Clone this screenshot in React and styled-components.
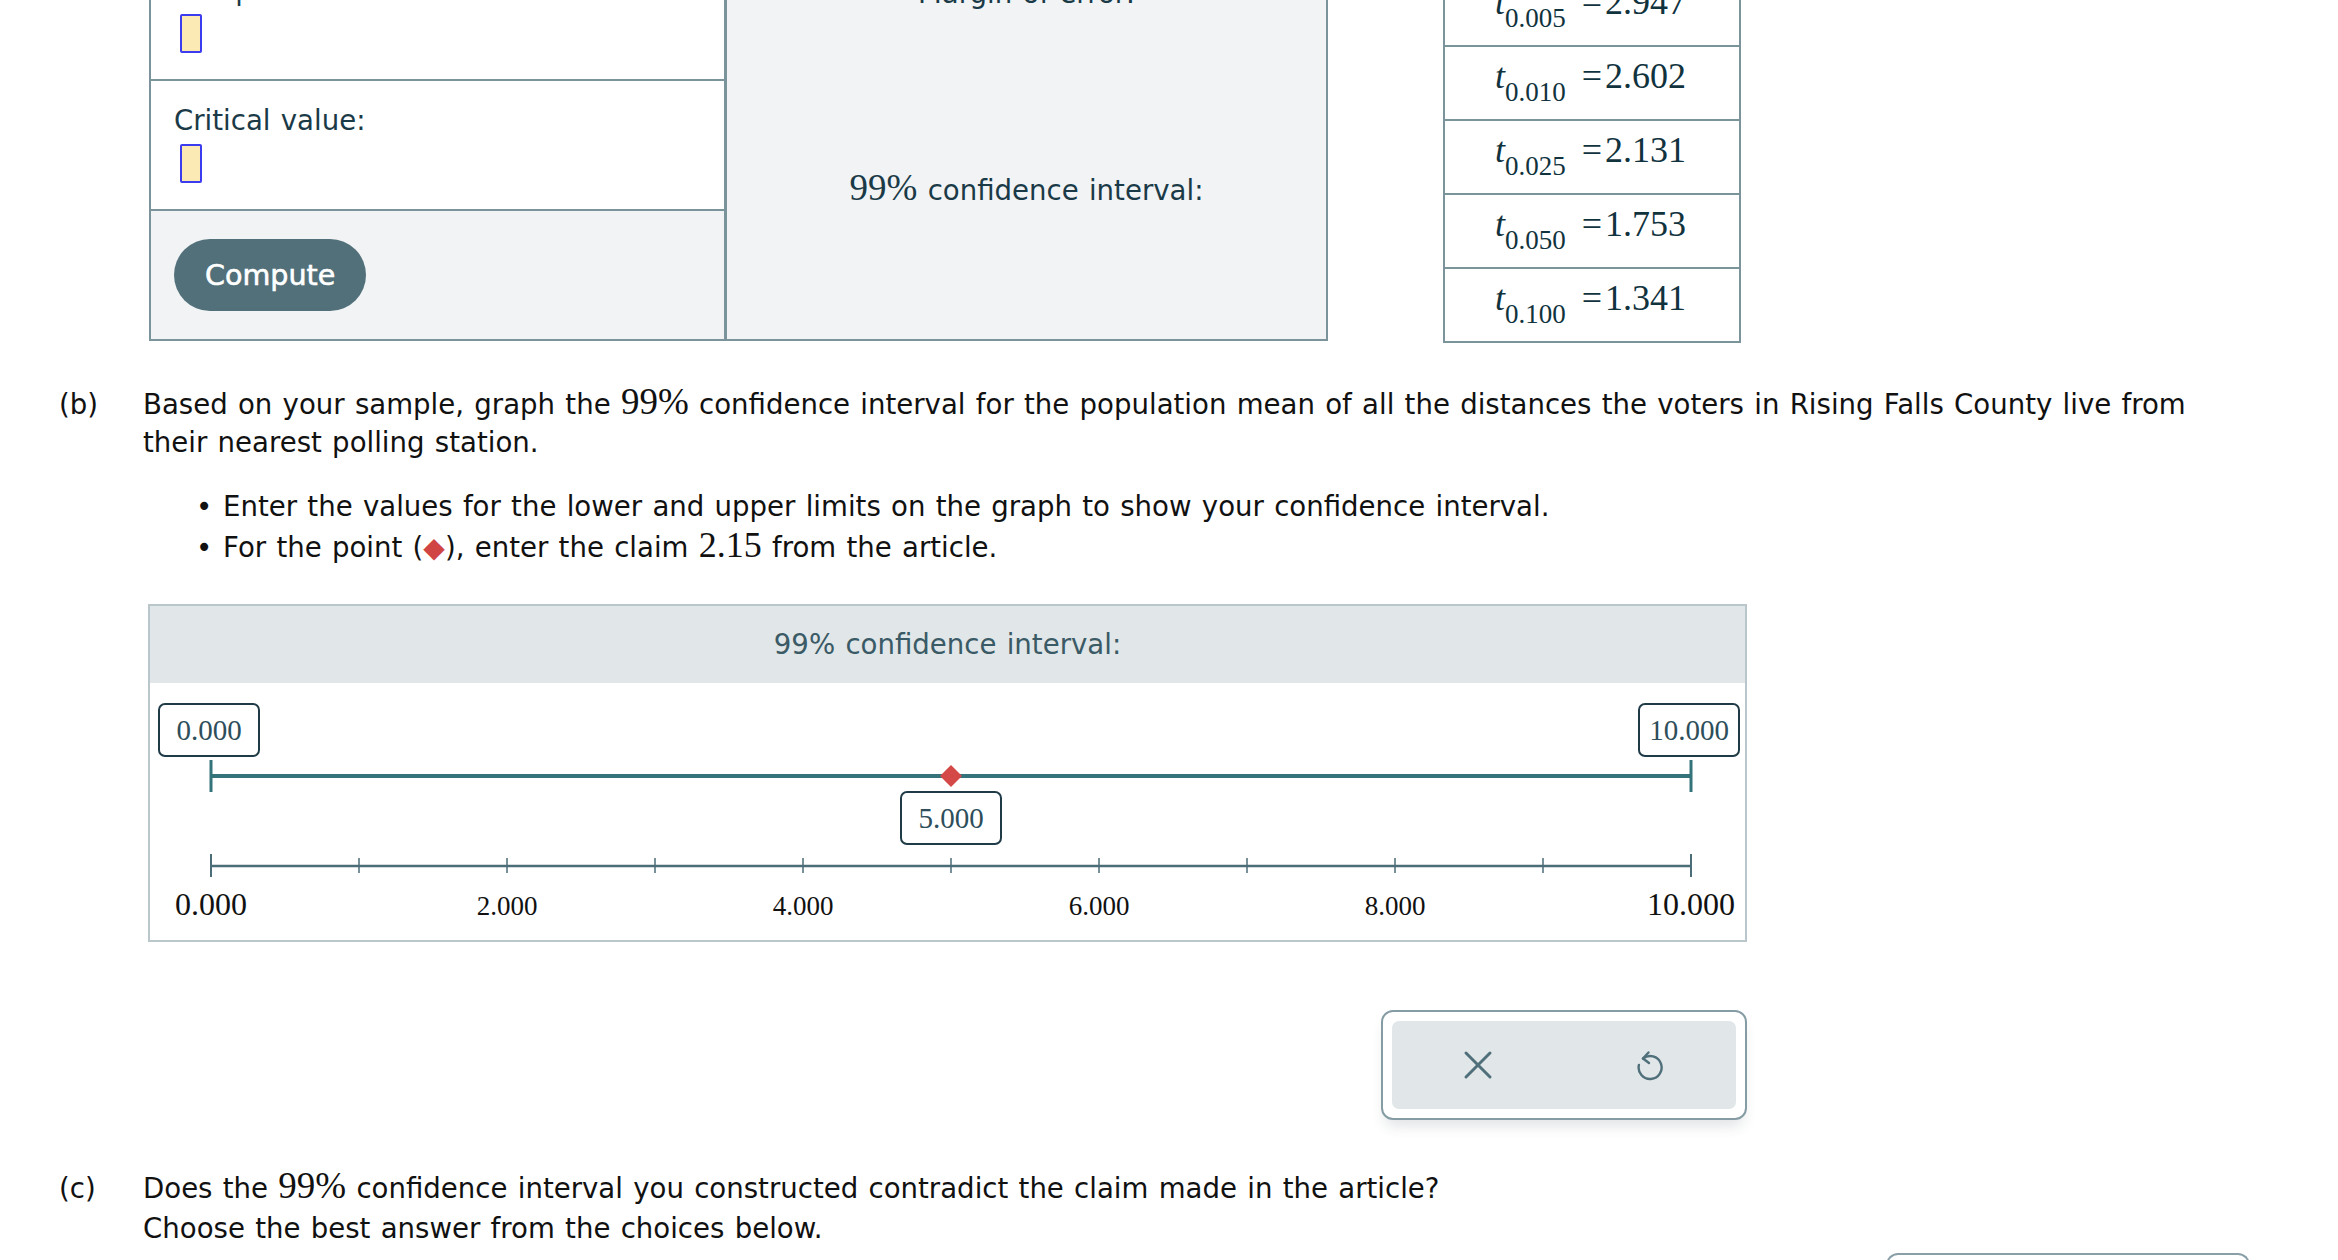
import React from 'react'
import styled, { createGlobalStyle } from 'styled-components'
import { X } from 'lucide-react'

const SANS = `"DejaVu Sans", Verdana, sans-serif`
const SERIF = `"Liberation Serif", "Times New Roman", serif`

const GlobalStyle = createGlobalStyle`
  html, body {
    margin: 0;
    padding: 0;
    background: #ffffff;
  }
  body {
    width: 2338px;
    height: 1260px;
    overflow: hidden;
    font-family: ${SANS};
    font-size: 27.6px;
    word-spacing: 1.5px;
    color: #111111;
  }
`

const Page = styled.div`
  margin-top: -51px;
  display: flex;
  flex-direction: column;
`

/* ---------- top: computation panel + t table ---------- */

const TopSection = styled.div`
  display: flex;
  align-items: flex-start;
  padding-left: 149px;
`

const PanelGroup = styled.div`
  display: flex;
  border: 2px solid #7b939b;
`

const LeftPanel = styled.div`
  width: 573px;
  border-right: 3px solid #7b939b;
  display: flex;
  flex-direction: column;
`

const FieldRow = styled.div`
  padding: 22px 23px 26px;
  background: #ffffff;
  border-bottom: 2px solid #7b939b;
  display: flex;
  flex-direction: column;
  align-items: flex-start;
`

const ButtonRow = styled.div`
  height: 128px;
  box-sizing: border-box;
  padding-left: 23px;
  background: #f1f3f5;
  display: flex;
  align-items: center;
`

const FieldLabel = styled.div`
  line-height: 36px;
  color: #1b3a47;
`

const BlankInput = styled.div`
  width: 22px;
  height: 39px;
  margin: 5px 0 0 6px;
  box-sizing: border-box;
  border: 2px solid #3b3bf0;
  border-radius: 2px;
  background: #fbeab3;
`

const ComputeButton = styled.button`
  height: 72px;
  padding: 0 31px;
  border: none;
  border-radius: 36px;
  background: #52707a;
  color: #ffffff;
  font-family: ${SANS};
  font-size: 28.6px;
  -webkit-text-stroke: 0.6px #ffffff;
`

const MiddlePanel = styled.div`
  width: 599px;
  background: #f1f3f5;
  padding-top: 25px;
  box-sizing: border-box;
  display: flex;
  flex-direction: column;
  align-items: center;
  gap: 161px;
`

const PanelText = styled.div`
  line-height: 36px;
  color: #1b3a47;
  white-space: nowrap;
`

const Serif = styled.span`
  font-family: ${SERIF};
  font-size: ${p => p.$size || 37}px;
  word-spacing: 0;
  line-height: 0;
`

const TTable = styled.div`
  margin: 22px 0 0 115px;
  width: 298px;
  box-sizing: border-box;
  border: 2px solid #7b939b;
  display: flex;
  flex-direction: column;
`

const TRow = styled.div`
  height: 72px;
  border-bottom: ${p => (p.$last ? 'none' : '2px solid #7b939b')};
  padding-left: 50px;
  font-family: ${SERIF};
  font-size: 36px;
  word-spacing: 0;
  line-height: 59px;
  color: #11333e;
  white-space: nowrap;
`

const TVar = styled.span`
  font-style: italic;
`

const TSub = styled.span`
  font-size: 27px;
  line-height: 0;
  vertical-align: -13px;
`

const TEq = styled.span`
  margin: 0 3px 0 16px;
`

/* ---------- parts (b) and (c) ---------- */

const Part = styled.section`
  display: grid;
  grid-template-columns: 84px 2090px;
  padding-left: 59px;
  margin-top: ${p => p.$mt}px;
  line-height: ${p => p.$lh}px;
  color: #111111;
`

const PartLabel = styled.div``

const PartBody = styled.div`
  display: flex;
  flex-direction: column;
`

const Paragraph = styled.p`
  margin: 0;
`

const BulletList = styled.ul`
  list-style: none;
  margin: 24px 0 0 53px;
  padding: 0;
  line-height: 41px;
`

const BulletItem = styled.li`
  display: flex;
`

const Bullet = styled.span`
  width: 27px;
  flex: none;
`

const Diamond = styled.span`
  color: #d04444;
  font-size: 28px;
`

const GraphBox = styled.div`
  margin: 36px 0 0 5px;
  width: 1599px;
  box-sizing: border-box;
  border: 2px solid #b9c6cb;
  background: #ffffff;
`

const GraphHeader = styled.div`
  height: 77px;
  line-height: 77px;
  text-align: center;
  background: #e1e6e8;
  color: #3a5a66;
`

const GraphCanvas = styled.div`
  position: relative;
  height: 257px;
`

const ValueBox = styled.div`
  position: absolute;
  left: ${p => p.$x}px;
  top: ${p => p.$y}px;
  width: 102px;
  height: 54px;
  box-sizing: border-box;
  border: 2px solid #1f3b47;
  border-radius: 7px;
  background: #ffffff;
  display: flex;
  align-items: center;
  justify-content: center;
  font-family: ${SERIF};
  font-size: 29px;
  color: #2d4e5a;
`

const ToolRow = styled.div`
  margin: 68px 0 0 5px;
  width: 1599px;
  display: flex;
  justify-content: flex-end;
`

const ToolFrame = styled.div`
  width: 366px;
  height: 110px;
  box-sizing: border-box;
  padding: 9px;
  border: 2px solid #869ca4;
  border-radius: 12px;
  background: #ffffff;
  box-shadow: 0 10px 14px -4px rgba(40, 60, 70, 0.14);
`

const ToolInner = styled.div`
  height: 100%;
  display: flex;
  background: #e1e6e8;
  border-radius: 7px;
`

const ToolButton = styled.button`
  flex: 1;
  border: none;
  background: transparent;
  display: flex;
  align-items: center;
  justify-content: center;
  color: #4f6f7a;
  padding: 0;
`

const BottomRow = styled.div`
  display: flex;
  justify-content: flex-end;
  padding-right: 88px;
  margin-top: 4px;
`

const ChoiceBox = styled.div`
  width: 364px;
  height: 60px;
  box-sizing: border-box;
  border: 2px solid #8aa0a8;
  border-bottom: none;
  border-radius: 12px 12px 0 0;
`

/* ---------- drawings ---------- */

const X0 = 61
const UNIT = 148

const NumberLine = () => {
  const ticks = Array.from({ length: 11 }, (_, i) => i)
  return (
    <svg width="1595" height="257" style={{ display: 'block' }}>
      <line x1={X0} x2={X0 + 10 * UNIT} y1="93" y2="93" stroke="#35737a" strokeWidth="4" />
      <line x1={X0} x2={X0} y1="77" y2="109" stroke="#35737a" strokeWidth="3" />
      <line x1={X0 + 10 * UNIT} x2={X0 + 10 * UNIT} y1="77" y2="109" stroke="#35737a" strokeWidth="3" />
      <polygon
        points={`${X0 + 5 * UNIT},82 ${X0 + 5 * UNIT + 11},93 ${X0 + 5 * UNIT},104 ${X0 + 5 * UNIT - 11},93`}
        fill="#d44848"
      />
      <line x1={X0} x2={X0 + 10 * UNIT} y1="183" y2="183" stroke="#4b6d77" strokeWidth="2.5" />
      {ticks.map(i => {
        const end = i === 0 || i === 10
        const x = X0 + i * UNIT
        return (
          <line
            key={i}
            x1={x}
            x2={x}
            y1={end ? 171 : 175}
            y2={end ? 194 : 190}
            stroke="#4b6d77"
            strokeWidth={end ? 2 : 1.5}
          />
        )
      })}
      {ticks
        .filter(i => i % 2 === 0)
        .map(i => {
          const end = i === 0 || i === 10
          return (
            <text
              key={i}
              x={X0 + i * UNIT}
              y="232"
              textAnchor="middle"
              fontFamily='"Liberation Serif", serif'
              fontSize={end ? 32 : 27}
              fill="#111111"
            >
              {i.toFixed(3)}
            </text>
          )
        })}
    </svg>
  )
}

const UndoIcon = () => (
  <svg width="26" height="34" viewBox="0 0 26 34" fill="none" stroke="currentColor" strokeWidth="2.4" strokeLinecap="round" strokeLinejoin="round">
    <path d="M6 10.5 A11.5 11.5 0 1 1 1.9 17" />
    <path d="M11.5 4.5 L6 10.5 L12 15" />
  </svg>
)

const tValues = [
  ['0.005', '2.947'],
  ['0.010', '2.602'],
  ['0.025', '2.131'],
  ['0.050', '1.753'],
  ['0.100', '1.341'],
]

const App = () => (
  <>
    <GlobalStyle />
    <Page>
      <TopSection>
        <PanelGroup>
          <LeftPanel>
            <FieldRow>
              <FieldLabel>Sample standard deviation:</FieldLabel>
              <BlankInput />
            </FieldRow>
            <FieldRow>
              <FieldLabel>Critical value:</FieldLabel>
              <BlankInput />
            </FieldRow>
            <ButtonRow>
              <ComputeButton>Compute</ComputeButton>
            </ButtonRow>
          </LeftPanel>
          <MiddlePanel>
            <PanelText>Margin of error:</PanelText>
            <PanelText>
              <Serif>99%</Serif> confidence interval:
            </PanelText>
          </MiddlePanel>
        </PanelGroup>
        <TTable>
          {tValues.map(([a, v], i) => (
            <TRow key={a} $last={i === tValues.length - 1}>
              <TVar>t</TVar>
              <TSub>{a}</TSub>
              <TEq>=</TEq>
              {v}
            </TRow>
          ))}
        </TTable>
      </TopSection>

      <Part $mt={43} $lh={38}>
        <PartLabel>(b)</PartLabel>
        <PartBody>
          <Paragraph>
            Based on your sample, graph the <Serif>99%</Serif> confidence interval for the population mean of all the
            distances the voters in Rising Falls County live from their nearest polling station.
          </Paragraph>
          <BulletList>
            <BulletItem>
              <Bullet>•</Bullet>
              <span>Enter the values for the lower and upper limits on the graph to show your confidence interval.</span>
            </BulletItem>
            <BulletItem>
              <Bullet>•</Bullet>
              <span>
                For the point (<Diamond>◆</Diamond>), enter the claim <Serif $size={36}>2.15</Serif> from the article.
              </span>
            </BulletItem>
          </BulletList>
          <GraphBox>
            <GraphHeader>99% confidence interval:</GraphHeader>
            <GraphCanvas>
              <NumberLine />
              <ValueBox $x={8} $y={20}>0.000</ValueBox>
              <ValueBox $x={1488} $y={20}>10.000</ValueBox>
              <ValueBox $x={750} $y={108}>5.000</ValueBox>
            </GraphCanvas>
          </GraphBox>
          <ToolRow>
            <ToolFrame>
              <ToolInner>
                <ToolButton aria-label="clear">
                  <X size={48} strokeWidth={1.5} />
                </ToolButton>
                <ToolButton aria-label="reset">
                  <UndoIcon />
                </ToolButton>
              </ToolInner>
            </ToolFrame>
          </ToolRow>
        </PartBody>
      </Part>

      <Part $mt={49} $lh={40}>
        <PartLabel>(c)</PartLabel>
        <PartBody>
          <Paragraph>
            Does the <Serif>99%</Serif> confidence interval you constructed contradict the claim made in the article?
            <br />
            Choose the best answer from the choices below.
          </Paragraph>
        </PartBody>
      </Part>
      <BottomRow>
        <ChoiceBox />
      </BottomRow>
    </Page>
  </>
)

export default App
